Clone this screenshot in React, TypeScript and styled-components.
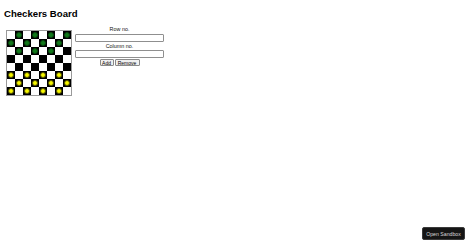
import React from "react";
import styled, { createGlobalStyle } from "styled-components";

const GlobalStyle = createGlobalStyle`
  html, body {
    margin: 0;
    padding: 0;
    background: #fff;
    font-family: "Liberation Sans", Arial, sans-serif;
  }
`;

type Piece = "g" | "y" | null;

// board as it appears: g = green piece, y = yellow piece
const layout: string[] = [
  ".g.g.g.g",
  "g.g.g.g.",
  ".g.g.g..",
  "........",
  "........",
  "y.y.y.y.",
  ".y.y.y.y",
  "y.y.y.y.",
];

const Page = styled.div`
  padding: 8px 4px 0 4px;
`;

const Title = styled.h1`
  margin: 0;
  font-size: 9.6px;
  line-height: 11px;
  font-weight: bold;
  color: #000;
`;

const Main = styled.div`
  display: flex;
  align-items: flex-start;
  gap: 3px;
  margin-top: 5px;
`;

const Board = styled.div`
  display: grid;
  grid-template-columns: repeat(8, 8px);
  grid-template-rows: repeat(8, 8px);
  border: 1px solid #9a9a9a;
  margin: 6px 0 0 2px;
`;

const Cell = styled.div<{ $dark: boolean }>`
  display: flex;
  align-items: center;
  justify-content: center;
  background: ${(p) => (p.$dark ? "#000" : "#fff")};
`;

const Disc = styled.div<{ $color: "g" | "y" }>`
  width: 6.4px;
  height: 6.4px;
  box-sizing: border-box;
  border-radius: 50%;
  background: ${(p) => (p.$color === "g" ? "#137a1c" : "#f7f700")};
  border: 0.5px solid ${(p) => (p.$color === "g" ? "#0a4a0e" : "#555500")};
`;

const Form = styled.div`
  width: 89px;
  margin-top: 1px;
  display: flex;
  flex-direction: column;
  align-items: center;
  text-align: center;
`;

const Label = styled.div`
  font-size: 5.4px;
  line-height: 8.5px;
  color: #111;
  height: 8.5px;
`;

const Field = styled.input`
  box-sizing: border-box;
  width: 89px;
  height: 8px;
  margin: 0;
  padding: 0;
  border: 0.6px solid #8f8f8f;
  border-radius: 1px;
  background: #fff;
  outline: none;
`;

const Buttons = styled.div`
  display: flex;
  gap: 1px;
  margin-top: 0.7px;
`;

const SmallButton = styled.button<{ $w: number }>`
  box-sizing: border-box;
  width: ${(p) => p.$w}px;
  height: 7px;
  margin: 0;
  padding: 0;
  font-family: "Liberation Sans", Arial, sans-serif;
  font-size: 5px;
  line-height: 6px;
  color: #000;
  background: #f0f0f0;
  border: 0.6px solid #8a8a8a;
  border-radius: 1px;
`;

const SandboxButton = styled.button`
  position: fixed;
  right: 9px;
  bottom: 8px;
  width: 43px;
  height: 13px;
  padding: 0;
  border: 0.5px solid #3a3a3a;
  border-radius: 2px;
  background: #151515;
  color: #d8d8d8;
  font-family: "Liberation Sans", Arial, sans-serif;
  font-size: 5.2px;
`;

const App = () => {
  const rows: Piece[][] = layout.map((r) =>
    r.split("").map((c) => (c === "g" ? "g" : c === "y" ? "y" : null))
  );

  return (
    <Page>
      <GlobalStyle />
      <Title>Checkers Board</Title>
      <Main>
        <Board>
          {rows.map((row, r) =>
            row.map((piece, c) => (
              <Cell key={`${r}-${c}`} $dark={(r + c) % 2 === 1}>
                {piece && <Disc $color={piece} />}
              </Cell>
            ))
          )}
        </Board>
        <Form>
          <Label>Row no.</Label>
          <Field type="text" />
          <Label>Column no.</Label>
          <Field type="text" />
          <Buttons>
            <SmallButton $w={14}>Add</SmallButton>
            <SmallButton $w={25}>Remove</SmallButton>
          </Buttons>
        </Form>
      </Main>
      <SandboxButton>Open Sandbox</SandboxButton>
    </Page>
  );
};

export default App;
